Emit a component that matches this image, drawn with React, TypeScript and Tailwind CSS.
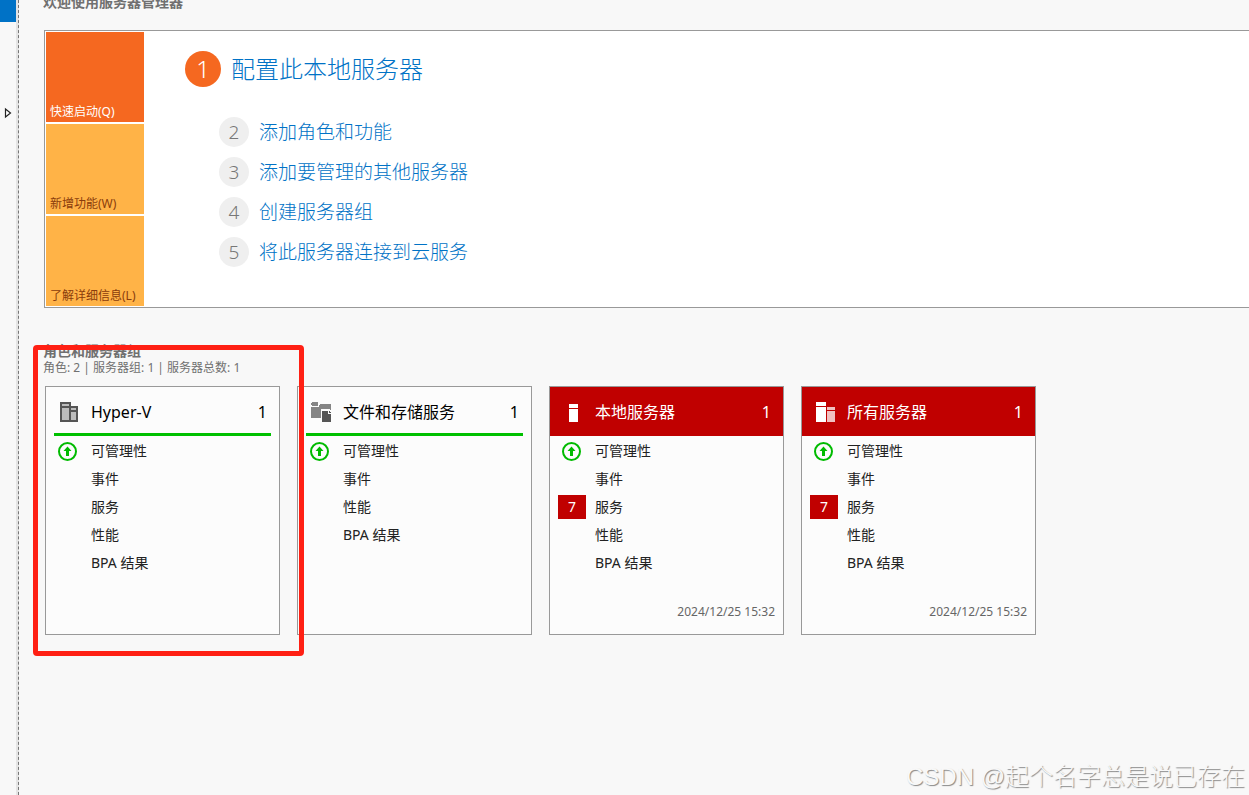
import clsx from 'clsx';

interface Role {
  name: string;
  count: number;
  icon: 'hyperv' | 'storage' | 'local' | 'all';
  items: string[];
  alerts?: Record<string, number>;
  checkedAt?: string;
}

const TILES = [
  { label: '快速启动(Q)', active: true },
  { label: '新增功能(W)', active: false },
  { label: '了解详细信息(L)', active: false },
];

const STEPS = ['添加角色和功能', '添加要管理的其他服务器', '创建服务器组', '将此服务器连接到云服务'];

const ROLES: Role[] = [
  {
    name: 'Hyper-V',
    count: 1,
    icon: 'hyperv',
    items: ['可管理性', '事件', '服务', '性能', 'BPA 结果'],
  },
  {
    name: '文件和存储服务',
    count: 1,
    icon: 'storage',
    items: ['可管理性', '事件', '性能', 'BPA 结果'],
  },
  {
    name: '本地服务器',
    count: 1,
    icon: 'local',
    items: ['可管理性', '事件', '服务', '性能', 'BPA 结果'],
    alerts: { 服务: 7 },
    checkedAt: '2024/12/25 15:32',
  },
  {
    name: '所有服务器',
    count: 1,
    icon: 'all',
    items: ['可管理性', '事件', '服务', '性能', 'BPA 结果'],
    alerts: { 服务: 7 },
    checkedAt: '2024/12/25 15:32',
  },
];

function RoleIcon({ icon }: { icon: Role['icon'] }) {
  return (
    <svg width="20" height="20" viewBox="0 0 20 20" shapeRendering="crispEdges" aria-hidden="true">
      {icon === 'hyperv' && (
        <>
          <path d="M1 0h11v20H1z" fill="#555" />
          <path d="M3 2h7v2H3zM3 6h7v12H3z" fill="#bcbcbc" />
          <path d="M10 4h9v16h-9z" fill="#555" />
          <path d="M12 6h5v2h-5zM12 10h5v8h-5z" fill="#bcbcbc" />
        </>
      )}
      {icon === 'storage' && (
        <>
          <path d="M1 0h5l1 1v2l-1 1H1L0 3V1zM0 5h7v11H0z" fill="#858585" />
          <path d="M8 3l1-1h10l1 1v5l-2 -1h-8v9H7V5h1z" fill="#858585" />
          <path d="M11 9h6v3h3v8h-9z" fill="#555" />
          <path d="M18 9l2 2h-2z" fill="#555" />
        </>
      )}
      {icon === 'local' && <path d="M6 2h9v4H6zM6 7h9v13H6z" fill="#fff" />}
      {icon === 'all' && (
        <>
          <path d="M1 0h10v4H1zM1 5h10v15H1z" fill="#fff" />
          <path d="M12 5h8v3h-8zM12 9h8v11h-8z" fill="#f0c0c0" />
        </>
      )}
    </svg>
  );
}

function OnlineIcon() {
  return (
    <svg width="19" height="19" viewBox="0 0 19 19" aria-hidden="true">
      <circle cx="9.5" cy="9.5" r="8.5" fill="none" stroke="#0b0" strokeWidth="2" />
      <path d="M9.5 4.5L13.5 9H11v5H8V9H5.5z" fill="#0b0" />
    </svg>
  );
}

function RoleCard({ role }: { role: Role }) {
  const critical = Boolean(role.alerts);

  return (
    <article className="flex min-h-[249px] w-[235px] flex-col border border-[#999] bg-[#fcfcfc]">
      <header
        className={clsx(
          'relative flex h-[49px] items-center pr-3 text-base',
          critical ? 'bg-[#c00000] text-white' : 'text-black',
        )}
      >
        <span className="flex w-[45px] justify-center">
          <RoleIcon icon={role.icon} />
        </span>
        <h3 className="flex-1">{role.name}</h3>
        <span>{role.count}</span>
        {!critical && <span className="absolute inset-x-2 bottom-0 h-[3px] bg-[#00c000]" />}
      </header>

      <ul className="pt-px text-sm text-[#222]">
        {role.items.map((item, i) => (
          <li key={item}>
            <button type="button" className="flex h-7 w-full items-center text-left">
              <span className="flex w-[45px] shrink-0 items-center pl-2">
                {i === 0 && (
                  <span className="ml-1">
                    <OnlineIcon />
                  </span>
                )}
                {role.alerts?.[item] && (
                  <span className="flex h-6 w-7 items-center justify-center bg-[#c00000] text-white">
                    {role.alerts[item]}
                  </span>
                )}
              </span>
              {item}
            </button>
          </li>
        ))}
      </ul>

      {role.checkedAt && (
        <time className="mt-auto pr-2 pb-3 text-right text-xs leading-5 text-[#666]">
          {role.checkedAt}
        </time>
      )}
    </article>
  );
}

export default function App() {
  return (
    <div className="relative flex min-h-screen overflow-hidden bg-[#f8f8f8] font-['Noto_Sans','Noto_Sans_CJK_SC',sans-serif]">
      {/* Collapsed navigation */}
      <nav className="flex w-4 shrink-0 flex-col">
        <div className="h-[22px] bg-[#0072c6]" />
        <button type="button" aria-label="展开导航" className="mt-[85px] ml-1">
          <svg width="8" height="12" viewBox="0 0 8 12" aria-hidden="true">
            <path d="M1.5 2v8l5-4z" fill="#fff" stroke="#222" strokeWidth="1.2" />
          </svg>
        </button>
      </nav>
      <div className="w-[3px] shrink-0 border-r border-dashed border-[#777] bg-[#e4e4e4]" />

      <main className="min-w-0 flex-1 pl-6">
        <div className="flex h-3 items-end overflow-hidden">
          <h1 className="text-sm leading-5 font-bold text-[#707070]">欢迎使用服务器管理器</h1>
        </div>

        {/* Welcome */}
        <section className="mt-[18px] ml-px flex border-y border-l border-[#999] bg-white p-px">
          <div className="flex w-[98px] shrink-0 flex-col gap-0.5">
            {TILES.map((tile) => (
              <button
                key={tile.label}
                type="button"
                className={clsx(
                  'flex h-[90px] items-end px-1 pb-0.5 text-xs whitespace-nowrap',
                  tile.active ? 'bg-[#f56820] text-white' : 'bg-[#ffb347] text-[#8a3c0c]',
                )}
              >
                {tile.label}
              </button>
            ))}
          </div>

          <div className="pt-[19px] pl-[41px]">
            <a href="#local" className="flex items-center gap-2.5 text-2xl font-light text-[#0072c6]">
              <span className="flex h-9 w-9 items-center justify-center rounded-full bg-[#f56820] text-white">
                1
              </span>
              配置此本地服务器
            </a>
            <ol className="mt-[30px] ml-[34px] flex flex-col gap-2.5">
              {STEPS.map((step, i) => (
                <li key={step}>
                  <a
                    href="#step"
                    className="flex items-center gap-2.5 text-[19px] leading-[30px] font-light text-[#0072c6]"
                  >
                    <span className="flex h-[30px] w-[30px] items-center justify-center rounded-full bg-[#efefef] text-[#777]">
                      {i + 2}
                    </span>
                    {step}
                  </a>
                </li>
              ))}
            </ol>
          </div>
        </section>

        {/* Roles and server groups */}
        <section className="relative mt-[34px]">
          <h2 className="text-sm leading-[18px] font-bold text-[#707070]">角色和服务器组</h2>
          <p className="text-xs text-[#707070]">角色: 2 | 服务器组: 1 | 服务器总数: 1</p>
          <div className="mt-2.5 ml-0.5 flex flex-wrap gap-[17px]">
            {ROLES.map((role) => (
              <RoleCard key={role.name} role={role} />
            ))}
          </div>
          <div className="pointer-events-none absolute top-[3px] -left-2.5 h-[311px] w-[271px] rounded border-5 border-[#ff2014]" />
        </section>
      </main>

      <p className="absolute right-1 bottom-0 font-['Liberation_Sans','Noto_Sans_CJK_SC',sans-serif] text-2xl leading-9 font-light text-[#f8f8f8] [text-shadow:1px_1px_1px_#888]">
        CSDN @起个名字总是说已存在
      </p>
    </div>
  );
}
